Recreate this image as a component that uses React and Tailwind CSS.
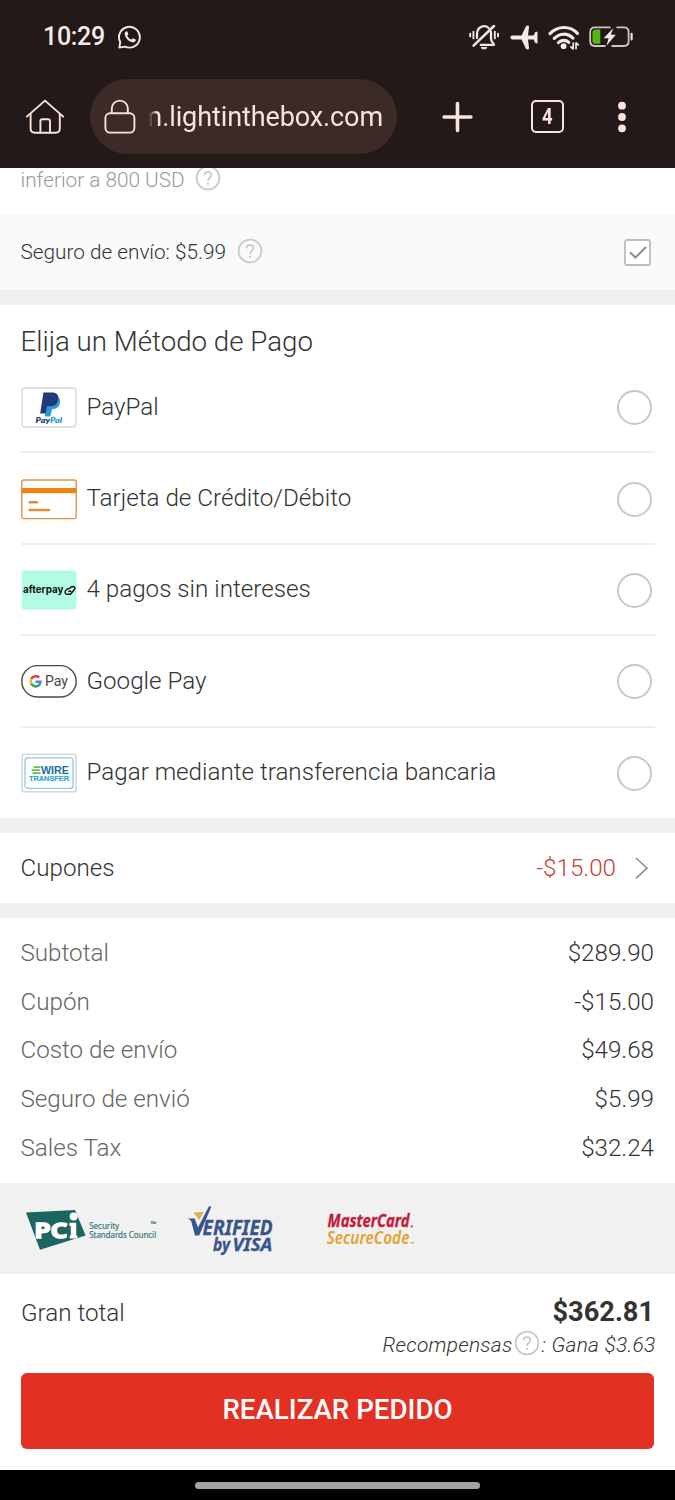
import React from "react";

function WhatsAppIcon() {
  return (
    <svg width="24" height="24" viewBox="0 0 24 24" fill="none">
      <path d="M1.4 22.6 L2.2 17 A10.4 10.4 0 1 1 7 21.6 Z" stroke="#f1e9e7" strokeWidth="1.9" strokeLinejoin="round" />
      <path d="M8.6 6.3 C7.2 6.7 6.4 8 6.8 9.8 C7.7 13.4 10.6 16.4 14.2 17.2 C16 17.5 17.5 16.6 17.8 15.2 L17.7 14.6 L15 13.2 L13.4 14.6 C11.4 13.8 10 12.4 9.2 10.5 L10.4 9.2 L9.3 6.5 Z" fill="#f1e9e7" />
    </svg>
  );
}

function MutedBellIcon() {
  return (
    <svg width="30" height="26" viewBox="0 0 30 26" fill="none" stroke="#efe7e5" strokeWidth="2.3" strokeLinecap="round">
      <path d="M8 14 V9.5 C8 5.5 11 2.2 15 2.2 C17 2.2 18.5 2.9 19.6 4" />
      <path d="M22 8 V14.5 C22 17.5 24 18.5 25 20.8 H11.8" strokeLinejoin="round" />
      <path d="M25 2 L4.6 21.7" strokeWidth="2.5" />
      <path d="M12.2 23.8 C13 25.4 17 25.4 17.9 23.8 Z" fill="#efe7e5" strokeWidth="1" />
      <path d="M4.4 7.8 V14.4 M1.2 9.6 V12.4 M25.8 7.8 V14.4 M29 9.6 V12.4" strokeWidth="1.9" />
    </svg>
  );
}

function PlaneIcon() {
  return (
    <svg width="28" height="25" viewBox="0 0 28 25" fill="#f1ebe9">
      <path d="M2 10.6 H11.6 L15.8 1.6 Q16.5 .4 18.2 .6 Q19.2 1 19 2 L18 10.6 H23.6 L25 7.6 Q25.8 6.4 27.5 6.8 V18.2 Q25.8 18.6 25 17.4 L23.6 14.4 H18 L19 23 Q19.2 24 18.2 24.4 Q16.5 24.6 15.8 23.4 L11.6 14.4 H2 Q.3 13.8 .3 12.5 Q.3 11.2 2 10.6 Z" />
    </svg>
  );
}

function WifiIcon() {
  return (
    <svg width="32" height="25" viewBox="0 0 32 25" fill="none" stroke="#f1ebe9" strokeWidth="3.1" strokeLinecap="round">
      <path d="M2 8.6 C9.8 .5 22.2 .5 29.4 8.4" />
      <path d="M6.2 13.4 C11.8 7.8 19.6 7.8 25 13.2" />
      <path d="M10.4 17.6 C13.4 14.7 18 14.7 20.8 17.4" />
      <circle cx="15.6" cy="21.2" r="2.9" fill="#f1ebe9" stroke="none" />
      <path d="M25.2 18 V23.6 M25 23.9 L22.9 21.8 M28 23.6 V18 M28.2 17.8 L30.2 19.8" strokeWidth="1.7" />
    </svg>
  );
}

function BatteryIcon() {
  return (
    <svg width="45" height="22" viewBox="0 0 45 22" fill="none">
      <path d="M21.5 1.4 H6 Q1.2 1.4 1.2 6 V15 Q1.2 20 6 20 H16.5 M27.5 1.4 H35 Q39.6 1.4 39.6 6 V15 Q39.6 20 35 20 H22.5" stroke="#cfc6c3" strokeWidth="1.8" />
      <path d="M11.3 3.6 H6.8 Q3.4 3.6 3.4 7 V14.4 Q3.4 17.8 6.8 17.8 H11.3 Z" fill="#56b516" />
      <path d="M24.4 2 L14.6 12.2 H19.6 L17.4 19.7 L26.8 8.8 H21.8 Z" fill="#f1ebe9" />
      <path d="M42.6 7.8 V13.4" stroke="#e9e1df" strokeWidth="2.2" strokeLinecap="round" />
    </svg>
  );
}

function HomeIcon() {
  return (
    <svg width="40" height="36" viewBox="0 0 40 36" fill="none" stroke="#fbe3db" strokeWidth="1.9" strokeLinecap="round" strokeLinejoin="round">
      <path d="M1.8 17.6 L20 1.6 L38.2 17.6" />
      <path d="M5.6 15 V29.6 Q5.6 33.8 9.8 33.8 H30.6 Q34.8 33.8 34.8 29.6 V15" />
      <path d="M15.4 33.4 V22.2 Q15.4 20.2 17.4 20.2 H23 Q25 20.2 25 22.2 V33.4" />
    </svg>
  );
}

function LockIcon() {
  return (
    <svg width="32" height="36" viewBox="0 0 32 36" fill="none" stroke="#f8e0d8" strokeWidth="1.9">
      <path d="M7.8 14 V9.6 A8 8 0 0 1 23.8 9.6 V14" />
      <rect x="1.4" y="14.2" width="29" height="19.4" rx="4.6" />
    </svg>
  );
}

function Help({ className = "" }) {
  return (
    <svg className={"shrink-0 " + className} width="26" height="26" viewBox="0 0 26 26" fill="none">
      <circle cx="13" cy="13" r="11.4" stroke="#c9c9c9" strokeWidth="1.8" />
      <path d="M9.4 10.3 C9.5 5.9 16.4 5.9 16.4 10 C16.4 12.7 13 12.6 13 16" stroke="#c4c4c4" strokeWidth="1.6" />
      <circle cx="13" cy="18.8" r="1.1" fill="#c4c4c4" />
    </svg>
  );
}

function PayPalLogo() {
  return (
    <svg width="56" height="41" viewBox="0 0 56 41">
      <rect x="1" y="1" width="54" height="39" rx="3" fill="#fff" stroke="#d8d8da" strokeWidth="1.4" />
      <path d="M25.5 10 H36 Q39.8 10.5 39 16 Q38 22 31 22.2 L29.3 29.5 H24 Z" fill="#2a9bd6" />
      <path d="M22.4 5.4 H32.4 Q38 6 37.2 12.4 Q36.2 19.3 28.6 19.3 H26 L24.7 26.6 H19.2 Z" fill="#223a7a" />
      <text x="14.6" y="36" fontFamily="Lato, sans-serif" fontSize="7.6" fontWeight="800" fontStyle="italic" fill="#25386f" textLength="26.5" lengthAdjust="spacingAndGlyphs">Pay<tspan fill="#2998d3">Pal</tspan></text>
    </svg>
  );
}

function CardLogo() {
  return (
    <svg width="56" height="41" viewBox="0 0 56 41" fill="none">
      <rect x=".8" y="1" width="54.4" height="38.6" rx="1.8" fill="#fff" stroke="#e2914a" strokeWidth="1.4" />
      <rect x=".8" y="9" width="54.4" height="5.2" fill="#ee820e" />
      <path d="M8.6 23.2 H16.2 M8.6 31 H28" stroke="#e28c35" strokeWidth="2.4" strokeLinecap="round" />
    </svg>
  );
}

function AfterpayLogo() {
  return (
    <svg width="56" height="41" viewBox="0 0 56 41">
      <rect x=".5" y="0.4" width="55" height="39" rx="3" fill="#b2fce4" />
      <text x="2" y="23.4" fontFamily="Inter, sans-serif" fontSize="10" fontWeight="700" fill="#111" textLength="40.5" lengthAdjust="spacingAndGlyphs">afterpay</text>
      <path d="M46.6 18.8 L44.6 20.6 Q43.4 22 44.4 23.4 Q45.2 24.2 46.4 24.2 H49.4 L51.4 22 M47.8 21.2 L49.8 21.2 M48.6 18.6 L50.4 16.8 H53.2 Q54.4 17.8 53.8 19 L51.4 22 M48.6 18.6 H46.6" fill="none" stroke="#111" strokeWidth="1.4" strokeLinejoin="round" strokeLinecap="round" />
    </svg>
  );
}

function GooglePayLogo() {
  return (
    <svg width="56" height="41" viewBox="0 0 56 41" fill="none">
      <rect x=".8" y="4.6" width="54.4" height="31.4" rx="15.7" fill="#fff" stroke="#4a4a4c" strokeWidth="1.4" />
      <g strokeWidth="2.6">
        <path d="M18.2 16.5 A5 5 0 0 0 10.2 18" stroke="#e44539" />
        <path d="M10.2 18 A5 5 0 0 0 10.2 22.6" stroke="#f4b81c" />
        <path d="M10.2 22.6 A5 5 0 0 0 17.8 24.2" stroke="#35a853" />
        <path d="M17.8 24.2 A5 5 0 0 0 19.5 20.7 H14.6" stroke="#4285f4" />
      </g>
      <text x="24" y="25.4" fontFamily="Roboto, sans-serif" fontSize="14.6" fontWeight="400" fill="#47494c" textLength="23" lengthAdjust="spacingAndGlyphs">Pay</text>
    </svg>
  );
}

function WireLogo() {
  return (
    <svg width="56" height="41" viewBox="0 0 56 41" fill="none">
      <rect x="1" y="1.2" width="54" height="37.6" rx="2" fill="#fff" stroke="#ccdadd" strokeWidth="1.6" />
      <rect x="4" y="4.8" width="48" height="30.6" rx="3" stroke="#91cadb" strokeWidth="1.3" />
      <path d="M12.6 14.2 H19.6 M10.6 17.2 H18.8 M11.6 20.2 H19.6" stroke="#6dbd45" strokeWidth="1.7" />
      <text x="20" y="21" fontFamily="Liberation Sans, sans-serif" fontSize="11.6" fontWeight="700" fill="#176f9d" textLength="28" lengthAdjust="spacingAndGlyphs">WIRE</text>
      <text x="8" y="27.6" fontFamily="Liberation Sans, sans-serif" fontSize="7.8" fontWeight="700" fill="#27a9cf" stroke="#27a9cf" strokeWidth=".2" textLength="40" lengthAdjust="spacingAndGlyphs">TRANSFER</text>
    </svg>
  );
}

function PciLogo() {
  return (
    <svg width="132" height="44" viewBox="0 0 132 44">
      <path d="M0 3.4 L49 1 L59.6 26.4 L14 40.8 Z" fill="#1d6561" />
      <text x="8.2" y="28.8" fontFamily="Noto Sans, sans-serif" fontSize="21" fontWeight="700" fill="#fff" stroke="#fff" strokeWidth="1.3" textLength="33.4" lengthAdjust="spacingAndGlyphs">PC</text>
      <path d="M43.4 13.8 H50.2 V26.4 H51.4 V29.4 H43.8 V26.4 H44.8 V17 H43.4 Z" fill="#fff" />
      <circle cx="47.6" cy="7.4" r="4" fill="#fff" />
      <g fontFamily="Noto Sans, sans-serif" fontSize="8.2" fontWeight="400" fill="#397c78" stroke="#397c78" strokeWidth=".2">
        <text x="63.2" y="19.8" textLength="30" lengthAdjust="spacingAndGlyphs">Security</text>
        <text x="63.2" y="28.8" textLength="67" lengthAdjust="spacingAndGlyphs">Standards Council</text>
        <text x="124.6" y="17.4" fontSize="6.5" textLength="5.6" lengthAdjust="spacingAndGlyphs">™</text>
      </g>
    </svg>
  );
}

function VerifiedLogo() {
  return (
    <svg width="90" height="54" viewBox="0 0 90 54">
      <path d="M5.4 7.4 L15.6 7 L11.4 15 Z" fill="#e0b04f" />
      <path d="M0 13.6 L6.6 13.4 L10 22.6 L20.8 1.6 L23.4 1.6 L11.2 30.4 H7 L3.2 16 Z" fill="#39568c" />
      <g fontFamily="Noto Sans, sans-serif" fontWeight="700" fontStyle="italic" fill="#39568c" stroke="#39568c" strokeWidth=".3">
        <text x="14.6" y="30" fontSize="21" textLength="70" lengthAdjust="spacingAndGlyphs">ERIFIED</text>
        <text x="25" y="46.2" fontSize="17" textLength="17" lengthAdjust="spacingAndGlyphs">by</text>
        <text x="44.4" y="46.2" fontSize="17.2" textLength="40" lengthAdjust="spacingAndGlyphs">VISA</text>
      </g>
    </svg>
  );
}

function SecureCodeLogo() {
  return (
    <svg width="90" height="38" viewBox="0 0 90 38">
      <g fontFamily="Noto Sans, sans-serif" fontStyle="italic">
        <text x="1.6" y="15.2" fontSize="18" fontWeight="700" fill="#c41b38" stroke="#c41b38" strokeWidth=".3" textLength="82" lengthAdjust="spacingAndGlyphs">MasterCard</text>
        <text x=".8" y="32" fontSize="18" fontWeight="600" fill="#e6a02c" textLength="82.6" lengthAdjust="spacingAndGlyphs">SecureCode</text>
      </g>
      <circle cx="85.8" cy="14.4" r="1.2" fill="#cf5266" />
      <path d="M84.8 30.8 H88.2" stroke="#e6b262" strokeWidth="1.6" />
    </svg>
  );
}

const methods = [
  { label: "PayPal", Logo: PayPalLogo },
  { label: "Tarjeta de Crédito/Débito", Logo: CardLogo },
  { label: "4 pagos sin intereses", Logo: AfterpayLogo },
  { label: "Google Pay", Logo: GooglePayLogo },
  { label: "Pagar mediante transferencia bancaria", Logo: WireLogo },
];

const totals = [
  ["Subtotal", "$289.90"],
  ["Cupón", "-$15.00"],
  ["Costo de envío", "$49.68"],
  ["Seguro de envió", "$5.99"],
  ["Sales Tax", "$32.24"],
];

export default function App() {
  return (
    <div className="flex h-[1500px] w-[675px] flex-col overflow-hidden bg-white font-['Roboto',sans-serif] font-light text-[#333333]">
      <header className="h-[168px] shrink-0 bg-[#231918] pt-[19px]">
        <div className="flex h-9 items-center pl-[43px] pr-[41px]">
          <span className="w-[74.5px] text-[25px] font-medium leading-9 tracking-[-0.3px] text-[#f3eceb]">10:29</span>
          <WhatsAppIcon />
          <div className="ml-auto flex items-center">
            <MutedBellIcon />
            <div className="ml-[11px] flex"><PlaneIcon /></div>
            <div className="ml-[10px] flex"><WifiIcon /></div>
            <div className="ml-[9px] flex"><BatteryIcon /></div>
          </div>
        </div>
        <div className="mt-6 flex h-[75px] items-center pl-[25px]">
          <HomeIcon />
          <div className="ml-[25px] flex h-[75px] w-[307px] items-center rounded-full bg-[#3c2a27] pl-[14px] pr-[14px]">
            <LockIcon />
            <div className="ml-[13px] mt-[1px] flex flex-1 justify-end overflow-hidden whitespace-nowrap text-[27px] font-normal tracking-[-0.1px] text-[#f7e2dc] [mask-image:linear-gradient(to_right,transparent,black_8px)]">
              <span>m.lightinthebox.com</span>
            </div>
          </div>
          <svg className="ml-[45px]" width="31" height="32" viewBox="0 0 31 32" stroke="#fbe3db" strokeWidth="3.6" strokeLinecap="round">
            <path d="M15.5 2.6 V29.4 M2.1 16 H28.9" />
          </svg>
          <div className="ml-[58px] flex h-[33px] w-[33px] items-center justify-center rounded-[5px] border-2 border-[#fbe3db] text-[22px] font-bold text-[#fbe3db]">
            <span className="scale-x-[0.84]">4</span>
          </div>
          <svg className="ml-[53px]" width="10" height="32" viewBox="0 0 10 32" fill="#fbe3db">
            <circle cx="5" cy="4.7" r="3.9" />
            <circle cx="5" cy="16" r="3.9" />
            <circle cx="5" cy="27.3" r="3.9" />
          </svg>
        </div>
      </header>

      <div className="flex h-[46px] shrink-0 items-start overflow-hidden pl-[20.5px] text-[20.75px] leading-6 text-[#999999]">
        <span>inferior a 800 USD</span>
        <Help className="-mt-[3px] ml-[10px]" />
      </div>
      <div className="flex h-[76px] shrink-0 items-center bg-[#fafafa] pl-[20.5px] pr-[24px] text-[20.75px]">
        <span className="mt-[1px]">Seguro de envío: $5.99</span>
        <Help className="-mt-[2px] ml-[11px]" />
        <svg className="ml-auto" width="27" height="27" viewBox="0 0 27 27" fill="none">
          <rect x="1" y="1" width="25" height="25" rx="2" fill="#fff" stroke="#bebebe" strokeWidth="1.9" />
          <path d="M6 13.2 L11.4 18.6 L22 8" stroke="#8f8f8f" strokeWidth="2.1" />
        </svg>
      </div>
      <div className="h-[15px] shrink-0 bg-[#f0f0f0]" />

      <section className="h-[513px] shrink-0 pl-[21px] pr-[20px] pt-[18px]">
        <h2 className="-ml-[0.5px] h-[39px] text-[27.7px] leading-[37px]">Elija un Método de Pago</h2>
        <ul className="flex flex-col">
          {methods.map(({ label, Logo }) => (
            <li key={label} className="flex h-[91.4px] items-center border-b-2 border-[#eeeeee] pr-[3.5px] pt-[2px] last:border-b-0 last:pt-0">
              <div className="-ml-[0.5px] flex w-[66px] shrink-0"><Logo /></div>
              <span className="-mt-[2px] whitespace-nowrap text-[24.2px]">{label}</span>
              <span className="ml-auto h-[35px] w-[35px] rounded-full border-[2.6px] border-[#c8c8c8]" />
            </li>
          ))}
        </ul>
      </section>
      <div className="h-[15px] shrink-0 bg-[#f0f0f0]" />

      <div className="flex h-[70px] shrink-0 items-center pl-[20.5px] pr-[26px] text-[24.2px]">
        <span>Cupones</span>
        <span className="ml-auto text-[#c8403a]">-$15.00</span>
        <svg className="ml-[18px]" width="15" height="24" viewBox="0 0 15 24" fill="none" stroke="#8f8f8f" strokeWidth="1.6">
          <path d="M2 2 L13 12.2 L2 22.4" />
        </svg>
      </div>
      <div className="h-[15px] shrink-0 bg-[#f0f0f0]" />

      <dl className="h-[265px] shrink-0 pl-[20.5px] pr-[21px] pt-[10.6px] text-[24.2px]">
        {totals.map(([name, value]) => (
          <div key={name} className="flex h-[48.8px] items-center justify-between">
            <dt className="text-[#666666]">{name}</dt>
            <dd>{value}</dd>
          </div>
        ))}
      </dl>

      <div className="flex h-[91px] shrink-0 items-start bg-[#f1f1f1] pl-[26px] pt-[22px]">
        <div className="mt-[4px] flex"><PciLogo /></div>
        <div className="ml-[30px] flex"><VerifiedLogo /></div>
        <div className="ml-[48px] mt-[7px] flex"><SecureCodeLogo /></div>
      </div>

      <footer className="flex h-[196px] shrink-0 flex-col px-[21px] pt-[20px]">
        <div className="flex h-[36px] items-center justify-between">
          <span className="mt-[3px] text-[24.2px]">Gran total</span>
          <span className="text-[27.2px] font-bold">$362.81</span>
        </div>
        <div className="-mr-[1.5px] flex h-[30px] items-center justify-end whitespace-nowrap text-[20.9px] italic tracking-[0.25px]">
          <span className="mt-[2px]">Recompensas</span>
          <Help className="-mt-[5px] ml-[1px] mr-[2px]" />
          <span className="mt-[2px]">: Gana $3.63</span>
        </div>
        <button className="mt-[13px] h-[76px] w-full rounded-[6px] bg-[#e23022] pb-[2px] text-[27.7px] font-medium text-white">REALIZAR PEDIDO</button>
      </footer>

      <div className="flex h-[30px] shrink-0 items-center justify-center bg-black">
        <div className="h-[7px] w-[285px] rounded-full bg-[#a2a2a2]" />
      </div>
    </div>
  );
}
